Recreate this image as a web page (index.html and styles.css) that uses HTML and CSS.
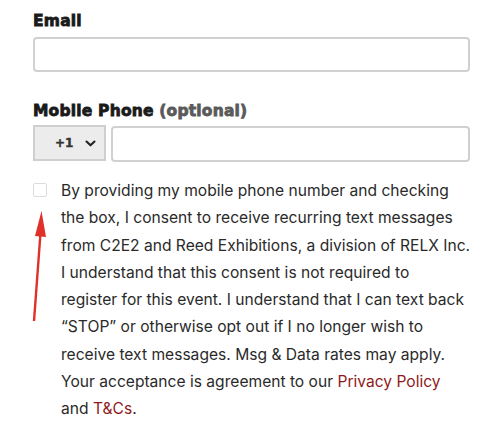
FILE: index.html
```html
<!DOCTYPE html>
<html>
<head>
<meta charset="utf-8">
<link rel="stylesheet" href="styles.css">
</head>
<body>
<form class="form">
  <div class="field">
    <label class="label">Email</label>
    <div class="input"></div>
  </div>
  <div class="field field-phone">
    <label class="label">Mobile Phone <span class="optional">(optional)</span></label>
    <div class="phone-row">
      <div class="select"><span class="code">+1</span>
        <svg class="chev" width="11" height="7" viewBox="0 0 11 7"><path d="M1.5 1.5 L5.5 5.3 L9.5 1.5" fill="none" stroke="#222" stroke-width="2.1" stroke-linecap="round" stroke-linejoin="round"/></svg>
      </div>
      <div class="input input-phone"></div>
    </div>
  </div>
  <div class="consent">
    <div class="box"></div>
    <p class="text">By providing my mobile phone number and checking<br>the box, I consent to receive recurring text messages<br>from C2E2 and Reed Exhibitions, a division of RELX Inc.<br>I understand that this consent is not required to<br>register for this event. I understand that I can text back<br>“STOP” or otherwise opt out if I no longer wish to<br>receive text messages. Msg &amp; Data rates may apply.<br>Your acceptance is agreement to our <a class="link">Privacy Policy</a><br>and <a class="link">T&amp;Cs</a>.</p>
    <svg class="arrow" width="20" height="112" viewBox="0 0 20 112"><path d="M2 110 L8.5 22" stroke="#e0302a" stroke-width="2.4" fill="none"/><path d="M9.5 0 L14 26 L3 25 Z" fill="#e0302a"/></svg>
  </div>
</form>
</body>
</html>
```
FILE: styles.css
```css
html, body { margin: 0; padding: 0; background: #fff; }
.form { padding: 12px 30px 0 33px; width: 437px; }
.label { display: block; font-family: "DejaVu Sans", sans-serif; font-weight: 700; font-size: 15.5px; letter-spacing: 0.2px; color: #1a1a1a; line-height: 18px; -webkit-text-stroke: 0.8px #1a1a1a; }
.optional { color: #5a5a5a; -webkit-text-stroke: 0.8px #5a5a5a; }
.input { height: 31px; margin-top: 7px; border: 2px solid #d0d0d0; border-radius: 4px; background: #fff; }
.field-phone { margin-top: 30px; }
.phone-row { display: flex; gap: 5px; margin-top: 5px; }
.select { width: 49px; height: 32px; border: 2px solid #cfcfcf; background: #ececec; display: flex; align-items: center; gap: 12px; padding-left: 20px; box-sizing: content-box; }
.code { font-family: "DejaVu Sans", sans-serif; font-weight: 700; font-size: 12px; color: #333; -webkit-text-stroke: 0.4px #333; }
.chev { margin-top: 1px; }
.input-phone { flex: 1; margin-top: 1px; height: 32px; }
.consent { position: relative; display: flex; gap: 14px; margin-top: 20px; }
.box { flex: none; width: 12px; height: 12px; border: 1px solid #dcdcdc; border-radius: 2px; margin-top: 1px; }
.text { margin: -5px 0 0 0; font-family: "Inter", "Liberation Sans", sans-serif; font-size: 15.6px; line-height: 27.3px; color: #2a2a2a; white-space: nowrap; }
.link { color: #8e1b1b; }
.arrow { position: absolute; left: -1px; top: 29px; }
```
